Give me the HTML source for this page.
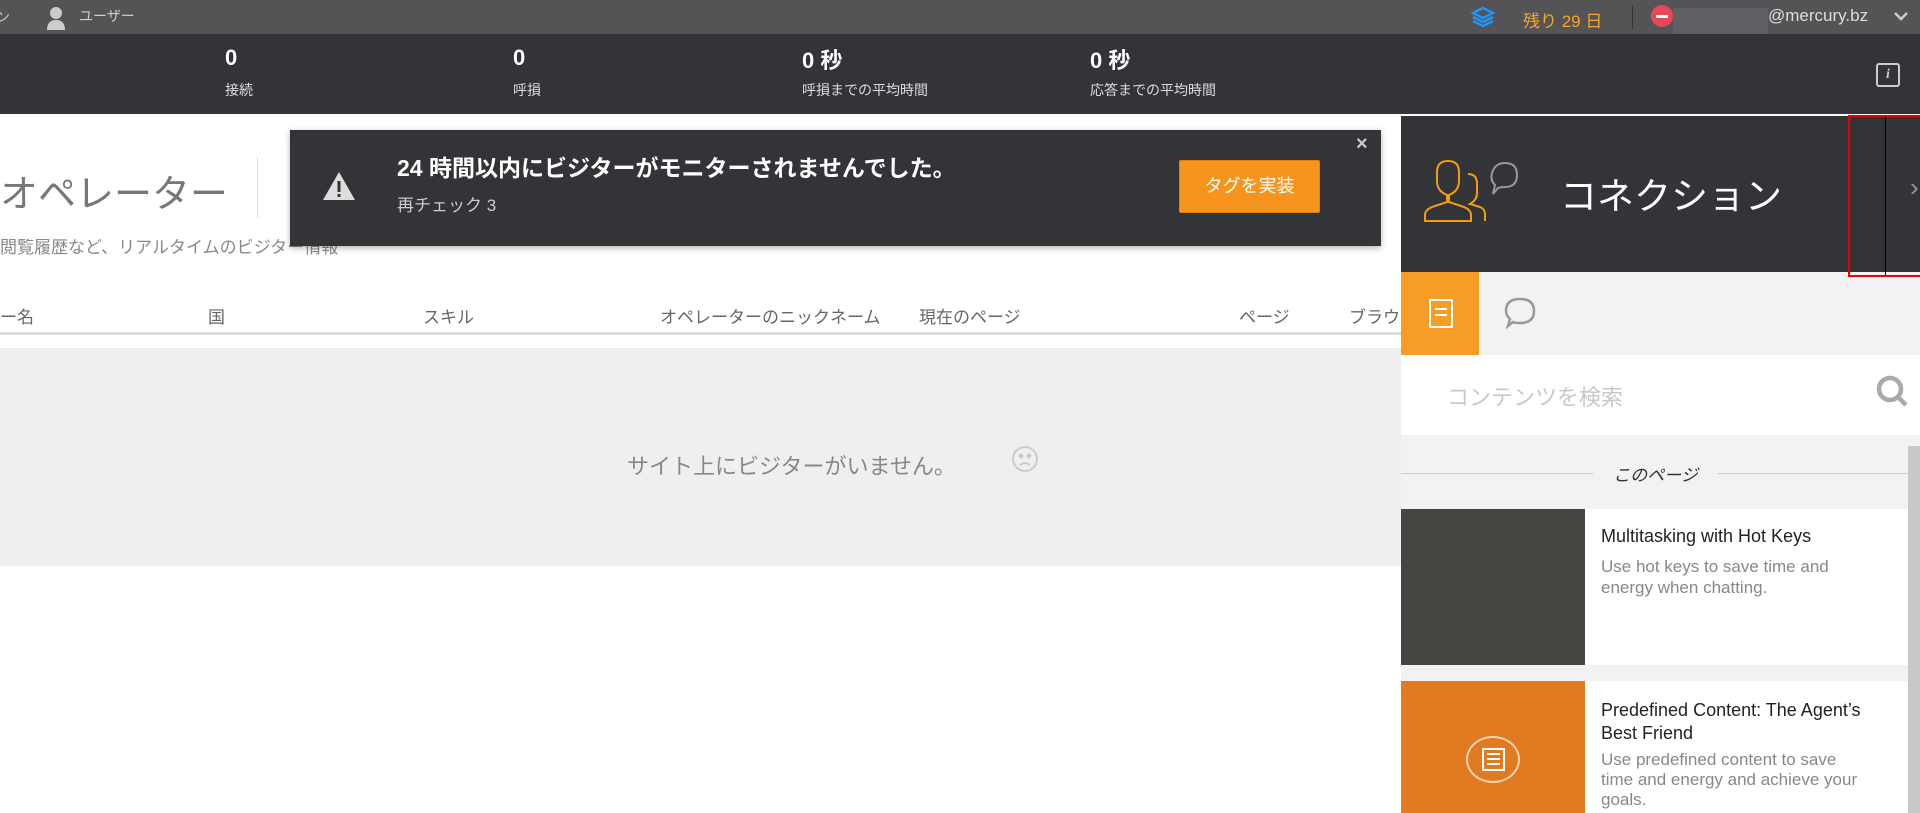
<!DOCTYPE html>
<html><head><meta charset="utf-8"><style>
*{margin:0;padding:0;box-sizing:border-box}
body{width:1920px;height:813px;overflow:hidden;background:#fff;font-family:"Liberation Sans","Noto Sans CJK JP",sans-serif;position:relative}
.a{position:absolute}
</style></head><body>
<div class="a" style="left:0;top:0;width:1920px;height:34px;background:#545456"></div>
<div class="a" style="left:-4px;top:7px;color:#ccc;font-size:14px">ン</div>
<svg class="a" style="left:46px;top:6px" width="20" height="24"><circle cx="10" cy="7" r="6" fill="#ccc"/><path d="M1 24 Q1 14 10 14 Q19 14 19 24Z" fill="#ccc"/></svg>
<div class="a" style="left:79px;top:6px;color:#ccc;font-size:14px">ユーザー</div>
<svg class="a" style="left:1471px;top:6px" width="24" height="22" fill="none" stroke="#2196f3" stroke-width="2.5"><path d="M12 2L22 7 12 12 2 7Z"/><path d="M2 11l10 5 10-5"/><path d="M2 15l10 5 10-5"/></svg>
<div class="a" style="left:1523px;top:7px;color:#f5a623;font-size:17px">残り 29 日</div>
<div class="a" style="left:1632px;top:5px;width:1px;height:24px;background:#333"></div>
<div class="a" style="left:1651px;top:5px;width:22px;height:22px;border-radius:50%;background:#e8475a"></div>
<div class="a" style="left:1656px;top:15px;width:12px;height:3px;background:#fff"></div>
<div class="a" style="left:1673px;top:8px;width:95px;height:30px;background:#606064"></div>
<div class="a" style="left:1768px;top:6px;color:#ddd;font-size:17px">@mercury.bz</div>
<svg class="a" style="left:1893px;top:10px" width="16" height="12" fill="none" stroke="#ccc" stroke-width="2.5"><path d="M2 3l6 6 6-6"/></svg>

<div class="a" style="left:0;top:34px;width:1920px;height:80px;background:#333438"></div>
<div class="a" style="left:225px;top:45px;color:#fff;font-size:22px;font-weight:bold">0</div>
<div class="a" style="left:225px;top:80px;color:#ddd;font-size:14px">接続</div>
<div class="a" style="left:513px;top:45px;color:#fff;font-size:22px;font-weight:bold">0</div>
<div class="a" style="left:513px;top:80px;color:#ddd;font-size:14px">呼損</div>
<div class="a" style="left:802px;top:43px;color:#fff;font-size:22px;font-weight:bold">0 秒</div>
<div class="a" style="left:802px;top:80px;color:#ddd;font-size:14px">呼損までの平均時間</div>
<div class="a" style="left:1090px;top:43px;color:#fff;font-size:22px;font-weight:bold">0 秒</div>
<div class="a" style="left:1090px;top:80px;color:#ddd;font-size:14px">応答までの平均時間</div>
<div class="a" style="left:1876px;top:63px;width:24px;height:24px;border:2px solid #ccc;border-radius:3px;color:#ccc;font-size:14px;font-style:italic;font-family:'Liberation Serif';text-align:center;line-height:20px;font-weight:bold">i</div>

<div class="a" style="left:0;top:163px;color:#777;font-size:38px">オペレーター</div>
<div class="a" style="left:257px;top:157px;width:1px;height:61px;background:#ddd"></div>
<div class="a" style="left:0;top:233px;color:#888;font-size:17px">閲覧履歴など、リアルタイムのビジター情報</div>
<div class="a" style="left:0;top:303px;width:1401px;color:#666;font-size:17px">
<span class="a" style="left:0">ー名</span><span class="a" style="left:208px">国</span><span class="a" style="left:423px">スキル</span><span class="a" style="left:660px">オペレーターのニックネーム</span><span class="a" style="left:919px">現在のページ</span><span class="a" style="left:1239px">ページ</span><span class="a" style="left:1349px">ブラウ</span></div>
<div class="a" style="left:0;top:332px;width:1401px;height:3px;background:#ddd"></div>
<div class="a" style="left:0;top:348px;width:1401px;height:218px;background:#efefef"></div>
<div class="a" style="left:627px;top:449px;color:#888;font-size:22px">サイト上にビジターがいません。</div>
<svg class="a" style="left:1011px;top:445px" width="28" height="28" fill="none" stroke="#ccc" stroke-width="2"><circle cx="14" cy="14" r="12"/><circle cx="10" cy="11" r="1.5" fill="#ccc"/><circle cx="18" cy="11" r="1.5" fill="#ccc"/><path d="M9 20q5-4 10 0"/></svg>

<div class="a" style="left:290px;top:130px;width:1091px;height:116px;background:#333438;box-shadow:0 2px 6px rgba(0,0,0,.3)"></div>
<svg class="a" style="left:322px;top:170px" width="34" height="32"><path d="M17 2L33 30H1Z" fill="#ddd"/><rect x="15.5" y="11" width="3" height="11" fill="#333"/><rect x="15.5" y="24" width="3" height="3" fill="#333"/></svg>
<div class="a" style="left:397px;top:149px;color:#fff;font-size:23px;font-weight:bold">24 時間以内にビジターがモニターされませんでした。</div>
<div class="a" style="left:397px;top:191px;color:#ccc;font-size:17px">再チェック 3</div>
<div class="a" style="left:1179px;top:160px;width:141px;height:53px;background:#f7941d;border:1px solid #e08010;border-radius:2px;color:#fff;font-size:18px;text-align:center;line-height:51px">タグを実装</div>
<div class="a" style="left:1356px;top:133px;color:#ccc;font-size:20px;font-weight:bold">×</div>

<div class="a" style="left:1401px;top:116px;width:519px;height:697px;background:#f2f2f2"></div>
<div class="a" style="left:1401px;top:116px;width:519px;height:156px;background:#333438"></div>
<svg class="a" style="left:1420px;top:148px" width="120" height="80" fill="none" stroke-width="2"><g stroke="#f39c12"><path d="M5 73v-6q0-6 10-9l12-4v-7q-10-4-10-14v-9q0-11 11-11t11 11v9q0 10-10 14v7l12 4q10 3 10 9v6Z"/><path d="M48 26q9 0 9 10v9q0 7-7 11l10 3q5 2 5 7v7"/></g><path d="M78 40l-5 6 2-9q-5-5-3-12 3-10 13-10 12 0 12 12 0 12-12 12-4 0-7 1z" stroke="#999"/></svg>
<div class="a" style="left:1560px;top:166px;color:#fff;font-size:37px">コネクション</div>
<div class="a" style="left:1848px;top:115px;width:72px;height:162px;border:2px solid #e00;border-right:none"></div>
<div class="a" style="left:1885px;top:117px;width:1px;height:158px;background:#000"></div>
<div class="a" style="left:1910px;top:172px;color:#999;font-size:26px">›</div>
<div class="a" style="left:1401px;top:272px;width:78px;height:83px;background:#f79c24"></div>
<div class="a" style="left:1429px;top:299px;width:24px;height:29px;border:2px solid #fff"></div>
<div class="a" style="left:1435px;top:308px;width:12px;height:8px;border-top:2px solid #fff;border-bottom:2px solid #fff"></div>
<svg class="a" style="left:1503px;top:297px" width="34" height="32" fill="none" stroke="#999" stroke-width="2.5"><path d="M5 29l2-7q-4-4-4-8 0-12 14-12 14 0 14 12t-14 12q-5 0-7-1z"/></svg>
<div class="a" style="left:1401px;top:355px;width:519px;height:80px;background:#fff"></div>
<div class="a" style="left:1447px;top:380px;color:#c8c8c8;font-size:22px">コンテンツを検索</div>
<svg class="a" style="left:1876px;top:375px" width="34" height="34" fill="none" stroke="#aaa" stroke-width="4.5"><circle cx="14" cy="14" r="11"/><path d="M22 22l8 8"/></svg>
<div class="a" style="left:1401px;top:473px;width:507px;height:1px;background:#ccc"></div>
<div class="a" style="left:1593px;top:461px;width:125px;height:24px;background:#f2f2f2;text-align:center;font-style:italic;color:#333;font-size:17px">このページ</div>
<div class="a" style="left:1908px;top:446px;width:12px;height:367px;background:#c8c8c8"></div>
<div class="a" style="left:1401px;top:509px;width:507px;height:156px;background:#fff"></div>
<div class="a" style="left:1401px;top:509px;width:184px;height:156px;background:#464541"></div>
<div class="a" style="left:1601px;top:526px;color:#222;font-size:18px">Multitasking with Hot Keys</div>
<div class="a" style="left:1601px;top:556px;color:#888;font-size:17px;line-height:21px;width:260px">Use hot keys to save time and energy when chatting.</div>
<div class="a" style="left:1401px;top:681px;width:507px;height:132px;background:#fff"></div>
<div class="a" style="left:1401px;top:681px;width:184px;height:132px;background:#e07b21"></div>
<div class="a" style="left:1466px;top:736px;width:54px;height:47px;border:2px solid #f7d3b0;border-radius:50%"></div>
<div class="a" style="left:1482px;top:748px;width:23px;height:23px;border:2px solid #fff;background:repeating-linear-gradient(#e07b21 0 3px,#fff 3px 5px);background-clip:content-box;padding:3px"></div>
<div class="a" style="left:1601px;top:699px;color:#222;font-size:18px;line-height:23px;width:265px">Predefined Content: The Agent’s Best Friend</div>
<div class="a" style="left:1601px;top:750px;color:#888;font-size:17px;line-height:20px;width:270px">Use predefined content to save time and energy and achieve your goals.</div>
</body></html>
